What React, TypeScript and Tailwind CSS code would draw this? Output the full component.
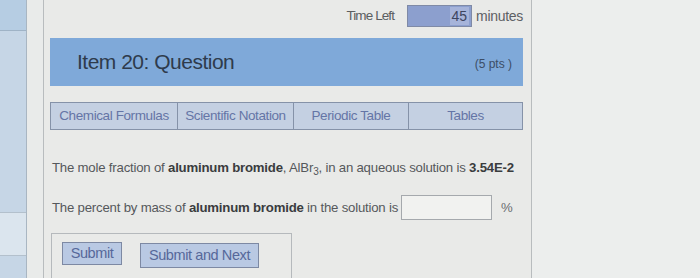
import React from "react";

export default function App() {
  const tabs = [
    { label: "Chemical Formulas", w: "w-[127px]" },
    { label: "Scientific Notation", w: "w-[116px]" },
    { label: "Periodic Table", w: "w-[115px]" },
    { label: "Tables", w: "flex-1" },
  ];
  return (
    <div
      className="w-[700px] h-[278px] flex bg-[#eceeed] overflow-hidden text-[#4f5255]"
      style={{ fontFamily: '"Liberation Sans", Arial, sans-serif' }}
    >
      {/* left sidebar */}
      <div className="w-[27px] flex flex-col bg-[#c6d6e6] border-r border-[#a9b6c2]">
        <div className="h-[31px] bg-[#b6cde3] border-b border-[#9fb3c6]" />
        <div className="flex-1" />
        <div className="h-[44px] bg-[#dbe5ee] border-y border-[#b3c0cc]" />
        <div className="h-[22px]" />
      </div>
      <div className="w-[16px] bg-[#e9ebea]" />
      {/* main panel */}
      <div className="w-[489px] border-x border-[#b8bcbe] bg-[#e9eae8] pl-[6px] pr-[8px] flex flex-col">
        <div className="h-[32px] flex items-center justify-end">
          <span className="text-[13.5px] text-[#5b5e61] mr-[13px] tracking-[-0.9px]">Time Left</span>
          <div className="w-[65px] h-[22px] bg-[#8c9fce] border border-[#7f8aa6] flex items-center justify-end pr-[2px]">
            <span className="text-[14px] text-[#3d4560] bg-[#a6b4da] px-[2px] leading-[18px]">45</span>
          </div>
          <span className="text-[14px] text-[#5d6064] ml-[4px] tracking-[-0.3px]">minutes</span>
        </div>
        <div className="h-[48px] bg-[#7fa9d9] flex items-center justify-between pl-[27px] pr-[11px] mt-[6px]">
          <span className="text-[21px] text-[#2e3b4c] tracking-[-0.5px]">Item 20: Question</span>
          <span className="text-[12px] text-[#3c4d66] mt-[3px]">(5 pts )</span>
        </div>
        <div className="h-[28px] mt-[16px] flex border border-[#8592a8] bg-[#c4d0e2]">
          {tabs.map((t, i) => (
            <div
              key={t.label}
              className={`${t.w} flex items-center justify-center text-[13.5px] text-[#6475a6] tracking-[-0.4px] ${
                i < 3 ? "border-r border-[#8592a8]" : ""
              }`}
            >
              {t.label}
            </div>
          ))}
        </div>
        <div className="mt-[30px] pl-[2px] text-[13.2px] text-[#55585b] tracking-[-0.2px] leading-[16px] whitespace-nowrap">
          The mole fraction of <b className="text-[#3a3c3e]">aluminum bromide</b>, AlBr<sub className="text-[10px]">3</sub>, in an aqueous solution is{" "}
          <b className="text-[#3a3c3e]">3.54E-2</b>
        </div>
        <div className="mt-[19px] pl-[2px] flex items-center text-[13.2px] text-[#55585b] tracking-[-0.2px] whitespace-nowrap">
          <span>
            The percent by mass of <b className="text-[#3a3c3e]">aluminum bromide</b> in the solution is
          </span>
          <div className="w-[91px] h-[25px] ml-[3px] bg-[#f1f2f0] border border-[#a5a9ad]" />
          <span className="ml-[9px] text-[#6a6d70]">%</span>
        </div>
        <div className="mt-[13px] ml-[1px] w-[241px] flex-1 border-x border-t border-[#b5b9bc] flex items-start gap-[18px] pl-[10px] pt-[8px]">
          <div className="w-[60px] h-[23px] bg-[#b9c9e3] border border-[#7d89a3] flex items-center justify-center text-[14.5px] text-[#56689a] tracking-[-0.4px]">
            Submit
          </div>
          <div className="w-[119px] h-[25px] mt-[1px] bg-[#b9c9e3] border border-[#7d89a3] flex items-center justify-center text-[14.5px] text-[#56689a] tracking-[-0.4px]">
            Submit and Next
          </div>
        </div>
      </div>
      <div className="flex-1 bg-[#eceeed]" />
    </div>
  );
}
